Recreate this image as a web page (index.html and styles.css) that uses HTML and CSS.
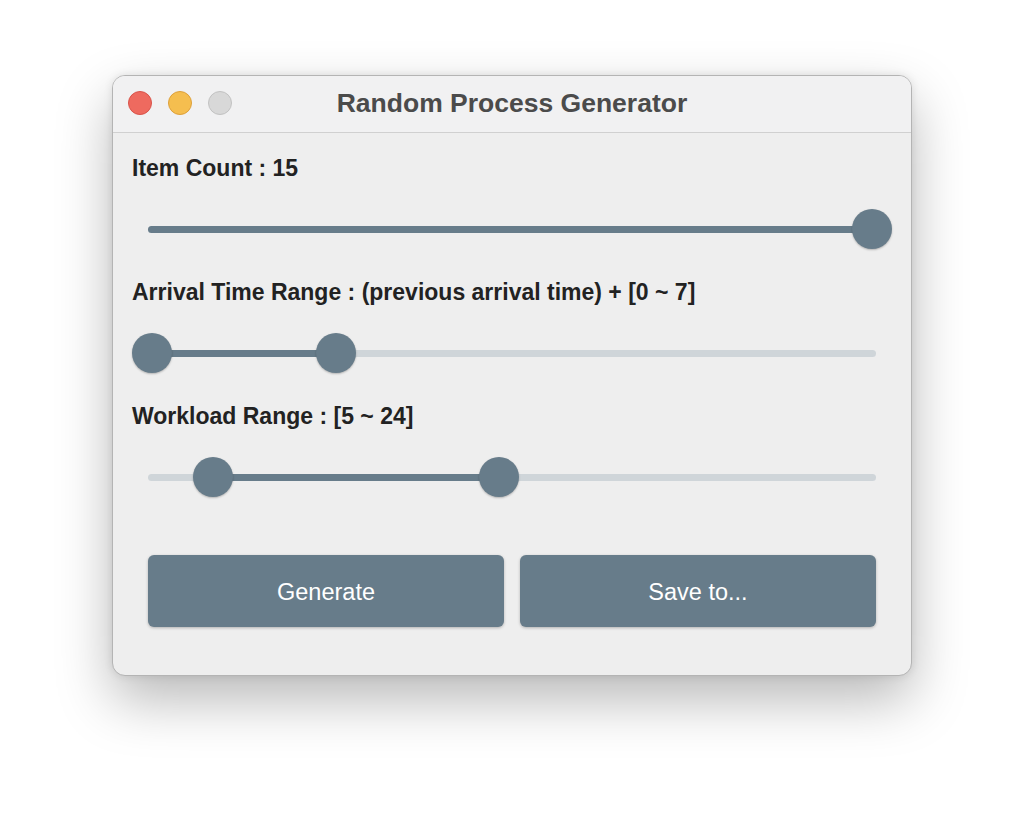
FILE: index.html
```html
<!DOCTYPE html>
<html>
<head>
<meta charset="utf-8">
<link rel="stylesheet" href="styles.css">
</head>
<body>
<div class="window">
  <div class="titlebar">
    <div class="lights">
      <span class="light red"></span>
      <span class="light yellow"></span>
      <span class="light grey"></span>
    </div>
    <div class="title">Random Process Generator</div>
  </div>
  <div class="content">
    <div class="group">
      <div class="label">Item Count : 15</div>
      <div class="slider">
        <div class="track"></div>
        <div class="fill" style="left:0;width:724px"></div>
        <div class="thumb" style="left:704px"></div>
      </div>
    </div>
    <div class="group">
      <div class="label">Arrival Time Range : (previous arrival time) + [0 ~ 7]</div>
      <div class="slider">
        <div class="track"></div>
        <div class="fill" style="left:0;width:188px"></div>
        <div class="thumb" style="left:-16px"></div>
        <div class="thumb" style="left:168px"></div>
      </div>
    </div>
    <div class="group">
      <div class="label">Workload Range : [5 ~ 24]</div>
      <div class="slider">
        <div class="track"></div>
        <div class="fill" style="left:65px;width:286px"></div>
        <div class="thumb" style="left:45px"></div>
        <div class="thumb" style="left:331px"></div>
      </div>
    </div>
    <div class="buttons">
      <button class="btn">Generate</button>
      <button class="btn">Save to...</button>
    </div>
  </div>
</div>
</body>
</html>
```
FILE: styles.css
```css
html, body {
  margin: 0;
  padding: 0;
  background: #ffffff;
  width: 1024px;
  height: 824px;
  overflow: hidden;
}
body {
  font-family: "Liberation Sans", Arial, sans-serif;
}
.window {
  width: 800px;
  height: 601px;
  margin: 75px auto 0;
  box-sizing: border-box;
  border-radius: 13px;
  background: #eeeeee;
  border: 1px solid #b4b4b4;
  box-shadow: 0 24px 55px rgba(0,0,0,0.28), 0 0 8px rgba(0,0,0,0.10);
  overflow: hidden;
}
.titlebar {
  height: 56px;
  background: #f1f1f2;
  border-bottom: 1px solid #d0d0d0;
  position: relative;
  display: flex;
  align-items: center;
  justify-content: center;
}
.lights {
  position: absolute;
  left: 15px;
  top: 15px;
  display: flex;
  gap: 16px;
}
.light {
  width: 24px;
  height: 24px;
  border-radius: 50%;
  box-sizing: border-box;
}
.red { background: #ee6a5f; border: 1px solid #d9534a; }
.yellow { background: #f5be4f; border: 1px solid #dea03a; }
.grey { background: #d8d8d8; border: 1px solid #c2c2c2; }
.title {
  font-size: 26.5px;
  font-weight: bold;
  color: #4b4b4b;
  margin-top: -1px;
}
.content {
  padding: 21px 35px 0 19px;
}
.group {
  margin-bottom: 29px;
}
.label {
  height: 28px;
  line-height: 28px;
  font-size: 23px;
  font-weight: bold;
  color: #222222;
  margin-bottom: 27px;
}
.slider {
  position: relative;
  height: 40px;
  margin-left: 16px;
  width: 728px;
}
.track {
  position: absolute;
  left: 0;
  right: 0;
  top: 17px;
  height: 7px;
  border-radius: 4px;
  background: #cfd5d9;
}
.fill {
  position: absolute;
  top: 17px;
  height: 7px;
  border-radius: 4px;
  background: #677c8a;
}
.thumb {
  position: absolute;
  top: 0;
  width: 40px;
  height: 40px;
  border-radius: 50%;
  background: #677c8a;
  box-shadow: 0 1px 2px rgba(0,0,0,0.25);
}
.buttons {
  display: flex;
  gap: 16px;
  margin-left: 16px;
  width: 728px;
  margin-top: 58px;
}
.btn {
  flex: 1;
  height: 72px;
  border: none;
  border-radius: 6px;
  background: #677c8a;
  color: #ffffff;
  font-family: "Liberation Sans", Arial, sans-serif;
  font-size: 23.5px;
  box-shadow: 0 1px 3px rgba(0,0,0,0.25);
  padding: 3px 0 0;
}
```
